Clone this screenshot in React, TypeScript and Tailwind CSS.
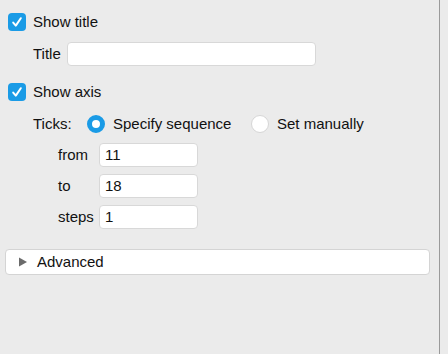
import React from "react";

function Check() {
  return (
    <div className="w-[18px] h-[18px] rounded-[4px] bg-[#1a9be6] flex items-center justify-center shrink-0">
      <svg width="14" height="14" viewBox="0 0 14 14">
        <path d="M3.2 7.6 L5.8 10.6 L10.8 3.2" fill="none" stroke="#fff" strokeWidth="2" strokeLinecap="round" strokeLinejoin="round" />
      </svg>
    </div>
  );
}

function Input({ value, w }: { value?: string; w: string }) {
  return (
    <div className={`${w} h-[24px] bg-white border border-[#d8d8d8] rounded-[4px] flex items-center pl-[5px] text-[15px] text-[#111]`}>
      {value}
    </div>
  );
}

export default function App() {
  return (
    <div className="w-[448px] h-[354px] bg-[#ebebeb] flex text-[15px] text-[#111]" style={{ fontFamily: '"Liberation Sans", Arial, sans-serif' }}>
      <div className="w-[440px] h-full border-r border-[#9a9a9a] flex flex-col">
        <div className="mt-[13px] h-[18px] flex items-center pl-[8px] gap-[7px]">
          <Check />
          <span>Show title</span>
        </div>
        <div className="mt-[11px] h-[24px] flex items-center pl-[33px] gap-[6px]">
          <span>Title</span>
          <Input w="w-[249px]" />
        </div>
        <div className="mt-[17px] h-[18px] flex items-center pl-[8px] gap-[7px]">
          <Check />
          <span>Show axis</span>
        </div>
        <div className="mt-[14px] h-[18px] flex items-center pl-[33px]">
          <span className="w-[54px]">Ticks:</span>
          <div className="w-[18px] h-[18px] rounded-full border-[5px] border-[#1a9be6] bg-white shrink-0" />
          <span className="ml-[8px] w-[138px]">Specify sequence</span>
          <div className="w-[18px] h-[18px] rounded-full border border-[#d6d6d6] bg-white shrink-0" />
          <span className="ml-[8px]">Set manually</span>
        </div>
        <div className="flex flex-col">
          <div className="mt-[10px] h-[24px] flex items-center">
            <span className="pl-[58px] w-[99px]">from</span>
            <Input w="w-[99px]" value="11" />
          </div>
          <div className="mt-[7px] h-[24px] flex items-center">
            <span className="pl-[58px] w-[99px]">to</span>
            <Input w="w-[99px]" value="18" />
          </div>
          <div className="mt-[7px] h-[24px] flex items-center">
            <span className="pl-[58px] w-[99px]">steps</span>
            <Input w="w-[99px]" value="1" />
          </div>
        </div>
        <div className="mt-[20px] ml-[5px] w-[425px] h-[26px] bg-white border border-[#d4d4d4] rounded-[4px] flex items-center">
          <svg width="10" height="10" viewBox="0 0 10 10" className="ml-[12px]">
            <path d="M1 0.5 L9 5 L1 9.5 Z" fill="#6b6b6b" />
          </svg>
          <span className="ml-[9px]">Advanced</span>
        </div>
      </div>
    </div>
  );
}
